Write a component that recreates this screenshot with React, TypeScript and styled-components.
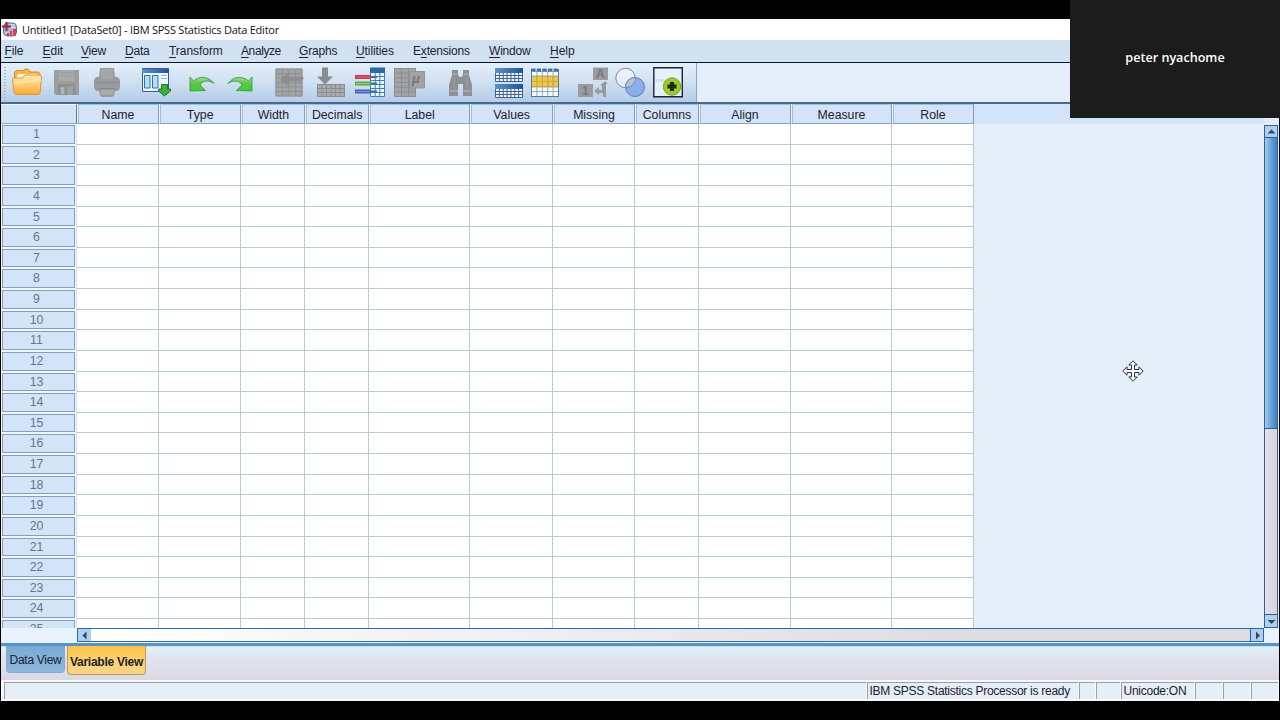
import React from 'react';
import styled, { createGlobalStyle } from 'styled-components';

const Global = createGlobalStyle`
  * { box-sizing: border-box; }
  body { margin: 0; background: #000; overflow: hidden; }
`;

const Screen = styled.div`
  position: relative;
  width: 1280px;
  height: 720px;
  padding: 19px 1px 0 1px;
  background: #000;
  font-family: 'Liberation Sans', Arial, sans-serif;
  font-size: 12px;
  color: #1c2230;
  overflow: hidden;
`;
const AppWindow = styled.div`
  display: flex;
  flex-direction: column;
  height: 682px;
  background: #e3eef9;
`;
const TitleBar = styled.div`
  display: flex;
  align-items: center;
  height: 21px;
  flex: none;
  gap: 5px;
  padding-left: 1px;
  background: #fff;
  font-family: 'Open Sans', 'Noto Sans', sans-serif;
  font-size: 11px;
  letter-spacing: -0.23px;
  color: #111;
`;
const MenuBar = styled.div`
  display: flex;
  height: 23px;
  flex: none;
  padding-left: 3.5px;
  line-height: 23px;
  background: #d0e1f2;
  border-bottom: 1px solid #0c1422;
`;
const MenuItem = styled.div<{ $w: number; $ls?: number }>`
  width: ${(p) => p.$w}px;
  letter-spacing: ${(p) => p.$ls ?? 0}px;
  white-space: nowrap;
  u { text-decoration-thickness: 1px; text-underline-offset: 2px; }
`;
const ToolStrip = styled.div`
  height: 41px;
  flex: none;
  display: flex;
  background: #e3eefa;
  border-bottom: 2px solid #47688f;
`;
const ToolBar = styled.div`
  display: flex;
  width: 696px;
  padding-top: 4px;
  background: linear-gradient(#e4effa, #cfe0f1 50%, #b3cce6);
  border-right: 1px solid #8ba6c4;
`;
const Grip = styled.div`
  width: 2px;
  height: 34px;
  margin-left: 3px;
  background: repeating-linear-gradient(#a3b3c6 0 1px, transparent 1px 3px);
`;
const Icon = styled.svg<{ $gap: number }>`
  display: block;
  flex: none;
  margin-left: ${(p) => p.$gap}px;
`;
const Editor = styled.div`
  display: flex;
  height: 524px;
  flex: none;
`;
const Sheet = styled.div`
  width: 1263px;
  height: 524px;
  overflow: hidden;
`;
const HeaderRow = styled.div`
  display: flex;
  height: 20px;
  width: 1278px;
  background: #d4e4f8;
`;
const Corner = styled.div`
  width: 76px;
  border-right: 1px solid #5b7ca3;
  border-top: 1px solid #f2f8ff;
  border-bottom: 1px solid #8ba7c4;
`;
const HeadCell = styled.div<{ $w: number }>`
  width: ${(p) => p.$w}px;
  border-left: 1px solid #eef6ff;
  border-right: 1px solid #7f9cbc;
  border-bottom: 1px solid #8aa5c4;
  box-shadow: inset 1px 1px 0 #a5bcd6;
  text-align: center;
  line-height: 22px;
  font-size: 12.3px;
`;
const Body = styled.div`
  height: 504px;
  overflow: hidden;
`;
const Row = styled.div`
  display: flex;
  height: 20.636px;
`;
const RowHead = styled.div`
  width: 76px;
  height: 100%;
  padding: 1px;
  background: #f0f7ff;
  border-right: 1px solid #d6e3f0;
`;
const RowNumber = styled.div`
  height: 100%;
  padding-right: 4px;
  border: 1px solid #849fbd;
  background: #d3e4f8;
  text-align: center;
  line-height: 17.5px;
  font-size: 12.3px;
  color: #667689;
`;
const Cell = styled.div<{ $w: number }>`
  width: ${(p) => p.$w}px;
  background: #fff;
  border-right: 1px solid #b6cbdc;
  border-bottom: 1px solid #b6cbdc;
`;
const VScroll = styled.div`
  display: flex;
  flex-direction: column;
  width: 14px;
  height: 503px;
  margin-top: 21px;
  border: 1px solid #2f6395;
  background: linear-gradient(90deg, #e3dfe8, #d9d2db);
`;
const VThumb = styled.div`
  height: 291px;
  background: linear-gradient(90deg, #a8cdee, #6fa5db 45%, #3c7fc6);
  border-bottom: 1px solid #2f6395;
`;
const Filler = styled.div`
  flex: 1;
`;
const ArrowBox = styled.div<{ $w: number; $h: number; $edge?: 'top' | 'bottom' }>`
  display: flex;
  align-items: center;
  justify-content: center;
  flex: none;
  width: ${(p) => p.$w}px;
  height: ${(p) => p.$h}px;
  background: #acd0f4;
  ${(p) => p.$edge && `border-${p.$edge}: 1px solid #2a5c96;`}
`;
const HScrollRow = styled.div`
  flex: none;
  height: 15px;
  padding-left: 76px;
  background: #e8f2fc;
`;
const HScroll = styled.div`
  display: flex;
  width: 1187px;
  height: 14px;
  border: 1px solid #2f6ba3;
  background: linear-gradient(#dcdbe5, #e2dcdf);
`;
const HTrack = styled.div`
  flex: 1;
  background: linear-gradient(90deg, #ffffff, #f0f0f5 35%, rgba(225, 220, 226, 0) 75%);
  border-right: 1px solid #2a5c96;
`;
const TabStrip = styled.div`
  display: flex;
  height: 37px;
  flex: none;
  border-top: 3px solid #5b93c0;
  padding-left: 5px;
  background: linear-gradient(#e0f1fa, #e1e5ef 35%, #d9d9e4);
  box-shadow: inset 0 1px 0 #c4e0f0;
`;
const Tab = styled.div<{ $active?: boolean }>`
  display: flex;
  justify-content: center;
  width: ${(p) => (p.$active ? 79 : 59)}px;
  height: ${(p) => (p.$active ? 29 : 27)}px;
  margin-right: 2px;
  border: 1px solid ${(p) => (p.$active ? '#b99b57' : '#83a9cd')};
  border-top: 0;
  border-radius: 0 0 4px 4px;
  background: ${(p) => (p.$active ? 'linear-gradient(#fbc44b, #fdd475 60%, #f5d487)' : 'linear-gradient(#79aad4, #8db7de)')};
  font-weight: ${(p) => (p.$active ? 'bold' : 'normal')};
  letter-spacing: ${(p) => (p.$active ? -0.25 : -0.3)}px;
  line-height: ${(p) => (p.$active ? 32 : 28)}px;
  white-space: nowrap;
`;
const StatusBar = styled.div`
  display: flex;
  flex: none;
  height: 21px;
  gap: 1px;
  padding: 2px 0 2px 3px;
  background: #f7f9fc;
`;
const StatusCell = styled.div<{ $w: number; $ls?: number }>`
  width: ${(p) => p.$w}px;
  padding-left: 1.5px;
  border-left: 1px solid #989fac;
  border-top: 1px solid #989fac;
  background: #e6eef8;
  line-height: 17px;
  letter-spacing: ${(p) => p.$ls ?? 0}px;
  white-space: nowrap;
`;
const CallerTile = styled.div`
  position: absolute;
  left: 1070px;
  top: 0;
  width: 210px;
  height: 118px;
  display: flex;
  align-items: center;
  justify-content: center;
  padding-bottom: 3px;
  background: #1c1c1c;
  color: #fff;
  font: 600 12.6px 'Open Sans', 'Noto Sans', sans-serif;
`;
const MoveCursor = styled.svg`
  position: absolute;
  left: 1122px;
  top: 360px;
`;

const menus: [string, number, number, number?][] = [
  ['File', 0, 38, -0.1], ['Edit', 0, 38.5], ['View', 0, 44, -0.2], ['Data', 0, 44, -0.2], ['Transform', 0, 72, -0.05],
  ['Analyze', 0, 58, -0.4], ['Graphs', 0, 57, -0.15], ['Utilities', 0, 57, -0.1], ['Extensions', 1, 76, -0.2],
  ['Window', 0, 61, -0.2], ['Help', 0, 40],
];
const columns: [string, number][] = [
  ['Name', 82], ['Type', 82.4], ['Width', 64], ['Decimals', 63.6], ['Label', 101.4], ['Values', 82.6],
  ['Missing', 82], ['Columns', 64], ['Align', 92], ['Measure', 101], ['Role', 82],
];

const Tri = ({ d }: { d: string }) => (
  <svg width="9" height="9" viewBox="0 0 9 9"><path d={d} fill="#3b4653" /></svg>
);

const gridPath = (x: number, y: number, w: number, h: number, nx: number, ny: number) => {
  let d = '';
  for (let i = 0; i <= nx; i++) d += `M${x + (w * i) / nx} ${y}v${h}`;
  for (let i = 0; i <= ny; i++) d += `M${x} ${y + (h * i) / ny}h${w}`;
  return d;
};

const tools: { x: number; w: number; art: React.ReactNode }[] = [
  {
    x: 12, w: 30, art: (
      <>
        <path d="M14.500 92V72.500l1.500-2h7l2-1.500h3l2 3h8.500l1.500 1.500V92z" fill="#f5b54b" stroke="#d98a22" />
        <path d="M17 76l1-2h20l1 2v3H17z" fill="#fff3d8" />
        <path d="M12.500 79.500l1-1.500h9l2.500-3h15l1.500 1.500-1.300 16-1.700 2H16l-1.800-1.500z" fill="url(#folder)" stroke="#e2932b" />
        <path d="M14 83l27-3" stroke="#ffe3a8" strokeWidth="2" />
      </>
    ),
  },
  {
    x: 54, w: 25, art: (
      <>
        <path d="M54 70h25v25H56l-2-2z" fill="#9b9d9f" />
        <path d="M59 70h15v11H59z" fill="#a8aaab" />
        <path d="M60 73h13M60 76h13" stroke="#999b9d" />
        <path d="M58 84h17v11H58z" fill="#8c8e90" />
        <path d="M60.500 87h4v7h-4z" fill="#b2b4b5" />
        <path d="M67 86h6v9h-6z" fill="#9fa1a3" />
      </>
    ),
  },
  {
    x: 94, w: 26, art: (
      <>
        <path d="M100 68h14l1 9h3l2 3v8l-2 3h-3l-1 5-2 1h-10l-2-1-1-5h-3l-2-3v-8l2-3h3z" fill="#989a9d" />
        <path d="M101 69h12v10h-12z" fill="#a4a6a8" />
        <path d="M96 82.500h22M98 88.500h18" stroke="#898b8e" />
        <path d="M101 90h12v5h-12z" fill="#a8aaab" />
      </>
    ),
  },
  {
    x: 141, w: 30, art: (
      <>
        <path d="M142.500 68.500h26v23h-26z" fill="#edf6fd" stroke="#2d5e9d" />
        <path d="M142 69h27v4h-27z" fill="url(#bar)" />
        <path d="M144.500 75.500h5.500v12.500h-5.500zM152.500 75.500h5.500v12.500h-5.500z" fill="#b7dcf6" stroke="#2f72ab" />
        <path d="M161 75.500h6M161 78.500h6" stroke="#8bb3d8" />
        <path d="M161.500 84.500h6v4.500h3v2l-6 5-6-5v-2h3z" fill="#3fb03a" stroke="#1f7c29" />
      </>
    ),
  },
  {
    x: 189, w: 26, art: (
      <path d="M190 77l3.500 4C199 76 208 75.500 214 83.500c-5-3.500-11-3.500-14 1.500l5.500 5.500-15.500.5z" fill="url(#leaf)" stroke="#35963a" strokeWidth=".8" />
    ),
  },
  {
    x: 227, w: 26, art: (
      <path d="M252 77l-3.500 4C243 76 234 75.500 228 83.500c5-3.500 11-3.500 14 1.500l-5.500 5.500 15.500.5z" fill="url(#leaf)" stroke="#35963a" strokeWidth=".8" />
    ),
  },
  {
    x: 275, w: 29, art: (
      <>
        <path d="M275.500 68.500h27v28h-27z" fill="#a1a3a5" />
        <path d={gridPath(276, 69, 26, 27, 4, 6)} stroke="#8e9092" fill="none" />
        <path d="M280 80l9-8v5h12v-1l3 2-3 3h-12v5z" fill="#8b8d8f" />
      </>
    ),
  },
  {
    x: 316, w: 30, art: (
      <>
        <path d="M322 67.500h6v9h5l-8 8-8-8h5z" fill="#8a8c8f" />
        <path d="M317 84h28v13h-28z" fill="#a9abac" />
        <path d={gridPath(317.5, 84.5, 27, 12, 6, 3)} stroke="#8a8c8e" fill="none" />
      </>
    ),
  },
  {
    x: 355, w: 30, art: (
      <>
        <path d="M370 68h14.500v29H370z" fill="#e8f5fd" />
        <path d={gridPath(370.5, 72.5, 14, 24, 3, 6)} stroke="#3f80b4" fill="none" />
        <path d="M370 67.500h15v5.500h-15z" fill="#2a69ac" />
        <path d="M355 77h16" stroke="#c93b51" strokeWidth="4" />
        <path d="M355 83.500h16" stroke="#59a84f" strokeWidth="4" />
        <path d="M355 91.500h16" stroke="#4a61b8" strokeWidth="4" />
        <path d="M356 77h14" stroke="#dc6a7a" /><path d="M356 83.500h14" stroke="#8fcf7c" /><path d="M356 91.500h14" stroke="#7c8fda" />
        <path d="M371 77h6M371 83.500h6M371 91.500h6" stroke="#3f6f9c" strokeWidth="2" />
      </>
    ),
  },
  {
    x: 394, w: 31, art: (
      <>
        <path d="M394 68h22v29h-22z" fill="#a1a3a5" />
        <path d={gridPath(394.5, 68.5, 21, 28, 3, 6)} stroke="#8b8d8f" fill="none" />
        <path d="M409.500 71.500h15V88h-15z" fill="#a0a2a4" stroke="#929496" />
        <text x="412" y="83" fontFamily="Liberation Sans" fontStyle="italic" fontWeight="bold" fontSize="13" fill="#737578">μ</text>
      </>
    ),
  },
  {
    x: 449, w: 23, art: (
      <>
        <path d="M452 70h6v5l1.500 2h2l1.500-2v-5h6v5l3 10v11h-9V84h-5v12h-9V85l3-10z" fill="#8d9093" />
        <path d="M450 91h8M463 91h8M453 74h4M464 74h4" stroke="#a4a7aa" strokeWidth="2" />
        <path d="M454 78v9M467 78v9" stroke="#a2a4a6" />
      </>
    ),
  },
  {
    x: 495, w: 28, art: (
      <>
        {[68, 84].map((y) => (
          <g key={y}>
            <path d={`M495 ${y}h28v14h-28z`} fill="#eff7fd" />
            <path d={gridPath(495.5, y + 4.5, 27, 9, 7, 3)} stroke="#3d638e" fill="none" />
            <path d={`M495 ${y}h28v5h-28z`} fill="url(#bar)" />
          </g>
        ))}
      </>
    ),
  },
  {
    x: 531, w: 28, art: (
      <>
        <path d="M531 68h28v29h-28z" fill="#f5fafe" />
        <path d="M531 76h28v11h-28z" fill="#edc64a" />
        <path d={gridPath(531.5, 71.5, 27, 25, 5, 5)} stroke="#91aac2" fill="none" />
        <path d="M531.500 76v11h27V76zM531 81.500h28M537 76v11M542.500 76v11M548 76v11M553 76v11" stroke="#d5a934" fill="none" />
        <path d="M531 70h28" stroke="#3e70a9" strokeWidth="3" strokeDasharray="4.600 1" />
        <path d="M531.500 69v28M558.500 69v28M531 96.500h28" stroke="#5f7892" fill="none" />
      </>
    ),
  },
  {
    x: 578, w: 30, art: (
      <>
        <path d="M593 67.500h15V80h-15zM578 84h15v13h-15z" fill="#999b9e" />
        <g fontFamily="Liberation Sans" fontWeight="bold" fontSize="12" fill="#75777a">
          <text x="596" y="78">A</text><text x="582" y="95">1</text>
        </g>
        <path d="M594 91l5-4v3h3v-4h-1v-2h1l3-3 3 3h-2v13h-3v-4h-4v2z" fill="#979a9e" />
      </>
    ),
  },
  {
    x: 615, w: 30, art: (
      <>
        <circle cx="625.500" cy="78" r="9.700" fill="#edf4fc" fillOpacity=".75" stroke="#7c8aa0" />
        <circle cx="635" cy="87" r="9.500" fill="#7da7e8" fillOpacity=".85" stroke="#627eb5" />
        <path d="M625.600 87.700a9.700 9.700 0 0 0 10-10.200 9.500 9.500 0 0 0-10 10.200z" fill="#b4c6df" stroke="#7c8aa0" />
      </>
    ),
  },
  {
    x: 653, w: 30, art: (
      <>
        <path d="M653.800 67.800h28.500v29h-28.500z" fill="#e6f0fa" stroke="#17243a" strokeWidth="1.400" />
        <path d="M655 79h10v3h-10z" fill="#d3e0ee" />
        <circle cx="672" cy="86.500" r="8.700" fill="#9ac928" stroke="#7ba51e" />
        <path d="M672 82v9M667.500 86.500h9" stroke="#1e2c16" strokeWidth="4" />
      </>
    ),
  },
];

export default function App() {
  return (
    <Screen>
      <Global />
      <AppWindow>
        <TitleBar>
          <svg width="15" height="15" viewBox="0 0 15 15">
            <rect x="1.500" y="1" width="13" height="13" rx="4" fill="#a8b9cf" stroke="#60718e" />
            <path d="M8 3h5M8 5.500h5M3 11h4" stroke="#e6eef6" />
            <path d="M4.500 0v9M0 4.500h9" stroke="#a51f46" strokeWidth="2" />
            <path d="M8 14V9h2v5zM11 14V7h3v7z" fill="#cf4561" />
            <path d="M5 14v-3h2v3z" fill="#b33a62" />
          </svg>
          <span>Untitled1 [DataSet0] - IBM SPSS Statistics Data Editor</span>
        </TitleBar>
        <MenuBar>
          {menus.map(([t, k, w, ls]) => (
            <MenuItem key={t} $w={w} $ls={ls}>{t.slice(0, k)}<u>{t[k]}</u>{t.slice(k + 1)}</MenuItem>
          ))}
        </MenuBar>
        <ToolStrip>
          <ToolBar>
            <Grip />
            {tools.map((t, i) => (
              <Icon key={t.x} $gap={i ? t.x - tools[i - 1].x - tools[i - 1].w : 6} width={t.w} height="32" viewBox={`${t.x} 67 ${t.w} 32`}>
                {i === 0 && (
                  <defs>
                    <linearGradient id="folder" x1="0" y1="0" x2="0" y2="1">
                      <stop offset="0" stopColor="#ffe9b4" /><stop offset=".5" stopColor="#ffcb70" /><stop offset="1" stopColor="#f9ab38" />
                    </linearGradient>
                    <linearGradient id="leaf" x1="0" y1="0" x2="0" y2="1">
                      <stop offset="0" stopColor="#a3dc9a" /><stop offset=".45" stopColor="#5ac84c" /><stop offset="1" stopColor="#46c835" />
                    </linearGradient>
                    <linearGradient id="bar">
                      <stop offset="0" stopColor="#5d92cb" /><stop offset="1" stopColor="#1e559a" />
                    </linearGradient>
                  </defs>
                )}
                {t.art}
              </Icon>
            ))}
          </ToolBar>
        </ToolStrip>
        <Editor>
          <Sheet>
            <HeaderRow>
              <Corner />
              {columns.map(([t, w]) => <HeadCell key={t} $w={w}>{t}</HeadCell>)}
            </HeaderRow>
            <Body>
              {Array.from({ length: 25 }, (_, r) => (
                <Row key={r}>
                  <RowHead><RowNumber>{r + 1}</RowNumber></RowHead>
                  {columns.map(([t, w]) => <Cell key={t} $w={w} />)}
                </Row>
              ))}
            </Body>
          </Sheet>
          <VScroll>
            <ArrowBox $w={12} $h={12} $edge="bottom"><Tri d="M0.500 6.500L4.500 2.500l4 4z" /></ArrowBox>
            <VThumb />
            <Filler />
            <ArrowBox $w={12} $h={13} $edge="top"><Tri d="M0.500 3l4 4 4-4z" /></ArrowBox>
          </VScroll>
        </Editor>
        <HScrollRow>
          <HScroll>
            <ArrowBox $w={13} $h={12}><Tri d="M6.500 0.500v8L2.500 4.500z" /></ArrowBox>
            <HTrack />
            <ArrowBox $w={12} $h={12}><Tri d="M3 0.500v8l4-4z" /></ArrowBox>
          </HScroll>
        </HScrollRow>
        <TabStrip>
          <Tab>Data View</Tab>
          <Tab $active>Variable View</Tab>
        </TabStrip>
        <StatusBar>
          <StatusCell $w={862} />
          <StatusCell $w={211} $ls={-0.27}>IBM SPSS Statistics Processor is ready</StatusCell>
          <StatusCell $w={16} />
          <StatusCell $w={24} />
          <StatusCell $w={73} $ls={-0.25}>Unicode:ON</StatusCell>
          <StatusCell $w={27} />
          <StatusCell $w={27} />
          <StatusCell $w={27} />
        </StatusBar>
      </AppWindow>
      <CallerTile>peter nyachome</CallerTile>
      <MoveCursor width="22" height="22" viewBox="0 0 22 22">
        <path d="M11 .8l4.200 4.200h-2.700v4.500h4.500V6.800l4.200 4.200-4.200 4.200v-2.700h-4.500v4.500h2.700L11 21.200 6.800 17h2.700v-4.500H5v2.700L.8 11 5 6.800v2.700h4.500V5H6.800z" fill="#fff" stroke="#29333f" />
      </MoveCursor>
    </Screen>
  );
}
